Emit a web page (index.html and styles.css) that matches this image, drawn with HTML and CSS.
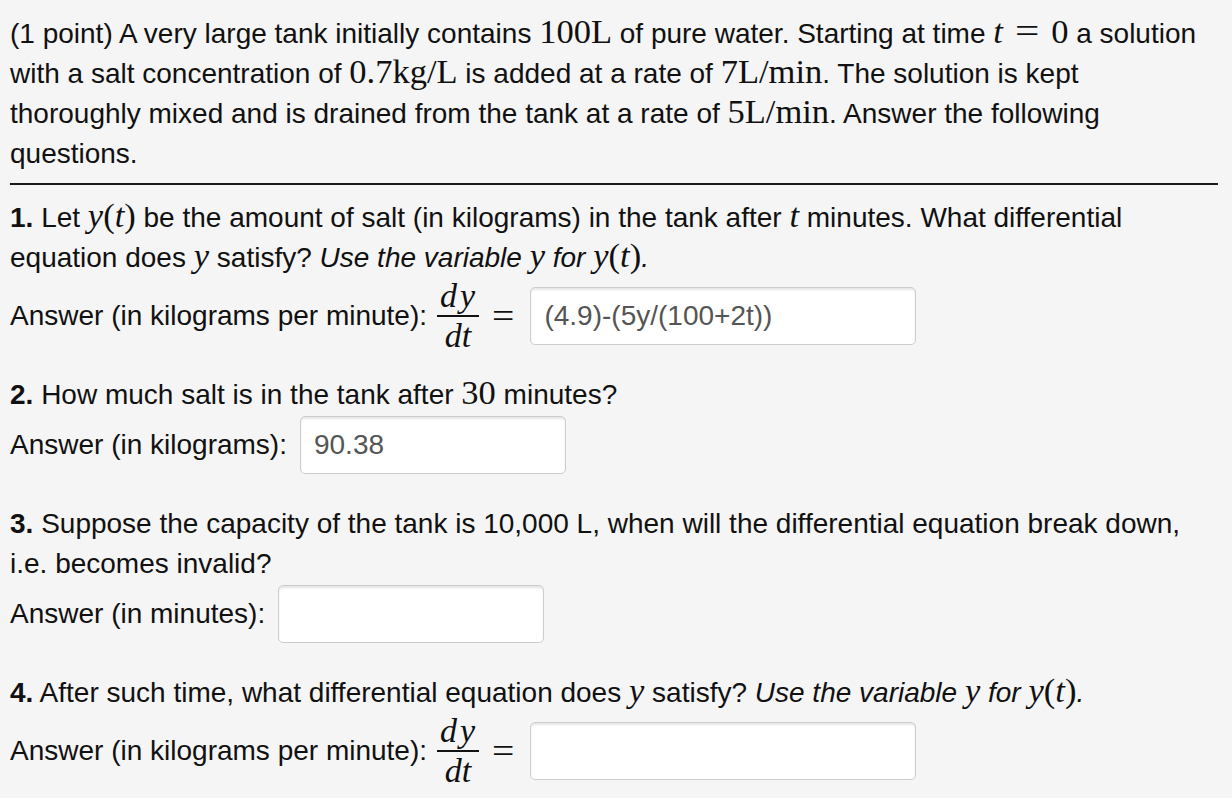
FILE: index.html
```html
<!DOCTYPE html>
<html>
<head>
<meta charset="utf-8">
<link rel="stylesheet" href="styles.css">
</head>
<body>
<div class="problem">
  <p class="intro">(1 point) A very large tank initially contains <span class="m">100L</span> of pure water. Starting at time <span class="m"><i>t</i><span class="rel">=</span>0</span> a solution with a salt concentration of <span class="m">0.7kg/L</span> is added at a rate of <span class="m">7L/min</span>. The solution is kept thoroughly mixed and is drained from the tank at a rate of <span class="m">5L/min</span>. Answer the following questions.</p>
  <hr class="rule">

  <div class="q">
    <p class="qtext"><b>1.</b> Let <span class="m"><i>y</i>(<i>t</i>)</span> be the amount of salt (in kilograms) in the tank after <span class="m"><i>t</i></span> minutes. What differential equation does <span class="m"><i>y</i></span> satisfy? <em>Use the variable <span class="m"><i>y</i></span> for <span class="m"><i>y</i>(<i>t</i>)</span>.</em></p>
    <div class="ans ans-frac">
      <span class="label">Answer (in kilograms per minute):</span>
      <span class="frac"><span class="num"><i>d</i><i>y</i></span><span class="den"><i>d</i><i>t</i></span></span>
      <span class="eq">=</span>
      <span class="field wide">(4.9)-(5y/(100+2t))</span>
    </div>
  </div>

  <div class="q">
    <p class="qtext"><b>2.</b> How much salt is in the tank after <span class="m">30</span> minutes?</p>
    <div class="ans">
      <span class="label">Answer (in kilograms):</span>
      <span class="field narrow">90.38</span>
    </div>
  </div>

  <div class="q">
    <p class="qtext"><b>3.</b> Suppose the capacity of the tank is 10,000 L, when will the differential equation break down, i.e. becomes invalid?</p>
    <div class="ans">
      <span class="label">Answer (in minutes):</span>
      <span class="field narrow"></span>
    </div>
  </div>

  <div class="q">
    <p class="qtext"><b>4.</b> After such time, what differential equation does <span class="m"><i>y</i></span> satisfy? <em>Use the variable <span class="m"><i>y</i></span> for <span class="m"><i>y</i>(<i>t</i>)</span>.</em></p>
    <div class="ans ans-frac">
      <span class="label">Answer (in kilograms per minute):</span>
      <span class="frac"><span class="num"><i>d</i><i>y</i></span><span class="den"><i>d</i><i>t</i></span></span>
      <span class="eq">=</span>
      <span class="field wide"></span>
    </div>
  </div>
</div>
</body>
</html>
```

FILE: styles.css
```css
html, body {
  margin: 0;
  padding: 0;
  background: #f5f5f5;
}
body {
  font-family: "Liberation Sans", Arial, sans-serif;
  font-size: 28px;
  line-height: 40px;
  color: #111;
}
.problem {
  padding: 13px 14px 0 10px;
}
p {
  margin: 0;
}
.intro {
  padding-right: 8px;
}
.m {
  font-family: "Liberation Serif", "Times New Roman", serif;
  font-size: 34.5px;
  line-height: 1;
  font-style: normal;
}
.m i {
  font-style: italic;
}
.rel {
  display: inline-block;
  font-size: 36px;
  transform: scaleX(1.2);
  margin: 0 14px;
}
.qtext em {
  font-style: italic;
}
.rule {
  border: 0;
  border-top: 2px solid #1a1a1a;
  margin: 9px 0 13px 0;
  height: 0;
}
.ans {
  display: flex;
  align-items: center;
  height: 58px;
  margin: 1px 0 30px 0;
}
.ans-frac {
  margin-top: 9px;
}
.label {
  margin-right: 13px;
}
.ans-frac .label {
  margin-right: 10px;
}
.frac {
  display: inline-flex;
  flex-direction: column;
  align-items: center;
  font-family: "Liberation Serif", "Times New Roman", serif;
  font-size: 34px;
  line-height: 30px;
}
.frac .num {
  padding: 0 1px 4px 3px;
  border-bottom: 2px solid #111;
  letter-spacing: 3px;
}
.frac .den {
  padding: 4px 2px 0;
}
.eq {
  display: inline-block;
  font-family: "Liberation Serif", "Times New Roman", serif;
  font-size: 36px;
  transform: scaleX(1.1);
  margin: 0 17px 0 14px;
}
.field {
  box-sizing: border-box;
  height: 58px;
  background: #fff;
  border: 1px solid #cdcdcd;
  border-radius: 5px;
  box-shadow: inset 0 2px 2px rgba(0, 0, 0, 0.1);
  color: #555;
  font-size: 28px;
  padding: 0 13px;
  display: flex;
  align-items: center;
  flex: none;
}
.wide {
  width: 386px;
}
.narrow {
  width: 266px;
}
```
